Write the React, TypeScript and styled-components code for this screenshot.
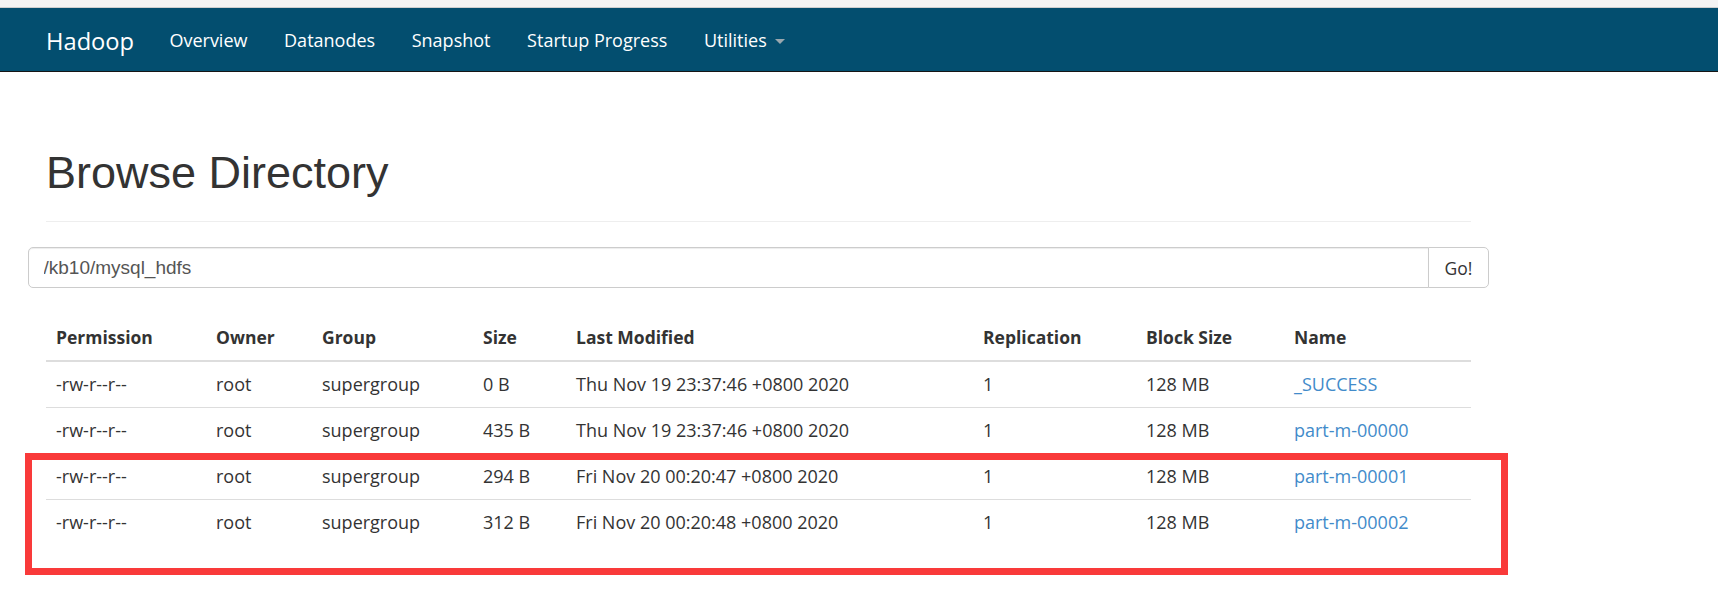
import styled, { createGlobalStyle } from 'styled-components'

type Entry = {
  permission: string
  owner: string
  group: string
  size: string
  modified: string
  replication: number
  blockSize: string
  name: string
}

const entries: Entry[] = [
  { permission: '-rw-r--r--', owner: 'root', group: 'supergroup', size: '0 B', modified: 'Thu Nov 19 23:37:46 +0800 2020', replication: 1, blockSize: '128 MB', name: '_SUCCESS' },
  { permission: '-rw-r--r--', owner: 'root', group: 'supergroup', size: '435 B', modified: 'Thu Nov 19 23:37:46 +0800 2020', replication: 1, blockSize: '128 MB', name: 'part-m-00000' },
  { permission: '-rw-r--r--', owner: 'root', group: 'supergroup', size: '294 B', modified: 'Fri Nov 20 00:20:47 +0800 2020', replication: 1, blockSize: '128 MB', name: 'part-m-00001' },
  { permission: '-rw-r--r--', owner: 'root', group: 'supergroup', size: '312 B', modified: 'Fri Nov 20 00:20:48 +0800 2020', replication: 1, blockSize: '128 MB', name: 'part-m-00002' },
]

const columns = [
  { label: 'Permission', width: 160 },
  { label: 'Owner', width: 106 },
  { label: 'Group', width: 161 },
  { label: 'Size', width: 93 },
  { label: 'Last Modified', width: 407 },
  { label: 'Replication', width: 163 },
  { label: 'Block Size', width: 148 },
  { label: 'Name', width: 187 },
]

const navItems = ['Overview', 'Datanodes', 'Snapshot', 'Startup Progress']

export default function App() {
  return (
    <Page>
      <GlobalStyle />
      <TopStrip />
      <Navbar>
        <Brand href="#">Hadoop</Brand>
        {navItems.map(item => (
          <NavLink key={item} href="#">{item}</NavLink>
        ))}
        <NavLink href="#">
          Utilities
          <Caret />
        </NavLink>
      </Navbar>

      <Main>
        <PageHeader>
          <Title>Browse Directory</Title>
        </PageHeader>

        <InputGroup>
          <PathInput type="text" defaultValue="/kb10/mysql_hdfs" />
          <GoButton type="button">Go!</GoButton>
        </InputGroup>

        <Table>
          <colgroup>
            {columns.map(col => (
              <Col key={col.label} $width={col.width} />
            ))}
          </colgroup>
          <thead>
            <tr>
              {columns.map(col => (
                <Th key={col.label}>{col.label}</Th>
              ))}
            </tr>
          </thead>
          <tbody>
            {entries.map(entry => (
              <tr key={entry.name}>
                <Td>{entry.permission}</Td>
                <Td>{entry.owner}</Td>
                <Td>{entry.group}</Td>
                <Td>{entry.size}</Td>
                <Td>{entry.modified}</Td>
                <Td>{entry.replication}</Td>
                <Td>{entry.blockSize}</Td>
                <Td>
                  <FileLink href="#">{entry.name}</FileLink>
                </Td>
              </tr>
            ))}
          </tbody>
        </Table>
      </Main>

      <Highlight />
    </Page>
  )
}

const GlobalStyle = createGlobalStyle`
  html, body {
    margin: 0;
    padding: 0;
    background: #ffffff;
  }
  body {
    font-family: "Open Sans", "Noto Sans CJK SC", sans-serif;
    font-size: 17.5px;
    color: #333333;
  }
  * {
    box-sizing: border-box;
  }
`

const Page = styled.div`
  position: relative;
  width: 1718px;
  min-height: 591px;
`

const TopStrip = styled.div`
  height: 8px;
  background: #f4f4f4;
  border-bottom: 1px solid #cfcfcf;
`

const Navbar = styled.nav`
  height: 64px;
  display: flex;
  align-items: center;
  padding-left: 27px;
  padding-top: 2px;
  background: #034e6f;
  border-bottom: 1px solid #161616;
`

const Brand = styled.a`
  padding: 0 17px 0 19px;
  font-size: 23.7px;
  color: #ffffff;
  text-decoration: none;
  line-height: 30px;
`

const NavLink = styled.a`
  display: flex;
  align-items: center;
  padding: 0 18.3px;
  font-size: 18px;
  color: #ffffff;
  text-decoration: none;
  line-height: 25px;
`

const Caret = styled.span`
  display: inline-block;
  margin-left: 8px;
  margin-top: 2px;
  width: 0;
  height: 0;
  border-top: 5px solid #9aa7ae;
  border-left: 5px solid transparent;
  border-right: 5px solid transparent;
`

const Main = styled.main`
  display: flex;
  flex-direction: column;
  margin-left: 27.5px;
  width: 1461.5px;
`

const PageHeader = styled.div`
  margin: 76px 18.5px 25px;
  padding-bottom: 11px;
  border-bottom: 1px solid #eeeeee;
`

const Title = styled.h1`
  margin: 0 0 12.5px;
  font-family: "Liberation Sans", Arial, sans-serif;
  font-size: 45px;
  font-weight: 400;
  line-height: 49.5px;
  color: #333333;
`

const InputGroup = styled.div`
  display: flex;
  height: 41px;
`

const PathInput = styled.input`
  flex: 1;
  height: 100%;
  padding: 0 15px;
  border: 1px solid #cccccc;
  border-radius: 5px 0 0 5px;
  box-shadow: inset 0 1px 1px rgba(0, 0, 0, 0.075);
  font-family: "Liberation Sans", Arial, sans-serif;
  font-size: 19px;
  color: #555555;
  outline: none;
`

const GoButton = styled.button`
  width: 61px;
  height: 100%;
  margin-left: -1px;
  border: 1px solid #cccccc;
  border-radius: 0 5px 5px 0;
  background: #ffffff;
  font-family: "Open Sans", sans-serif;
  font-size: 17.5px;
  color: #333333;
  cursor: pointer;
`

const Table = styled.table`
  width: 1425px;
  margin: 27px 18.5px 0;
  border-collapse: collapse;
  table-layout: fixed;
  font-size: 18px;
`

const Col = styled.col<{ $width: number }>`
  width: ${props => props.$width}px;
`

const Th = styled.th`
  padding: 10px;
  line-height: 25px;
  text-align: left;
  font-weight: 700;
  font-size: 17.5px;
  color: #333333;
  border-bottom: 2px solid #dddddd;
  white-space: nowrap;
`

const Td = styled.td`
  padding: 10px;
  line-height: 25px;
  color: #333333;
  border-top: 1px solid #dddddd;
  white-space: nowrap;
`

const FileLink = styled.a`
  color: #428bca;
  text-decoration: none;
`

const Highlight = styled.div`
  position: absolute;
  left: 25px;
  top: 453px;
  width: 1483px;
  height: 122px;
  border: 7px solid #f93a3a;
  pointer-events: none;
`
